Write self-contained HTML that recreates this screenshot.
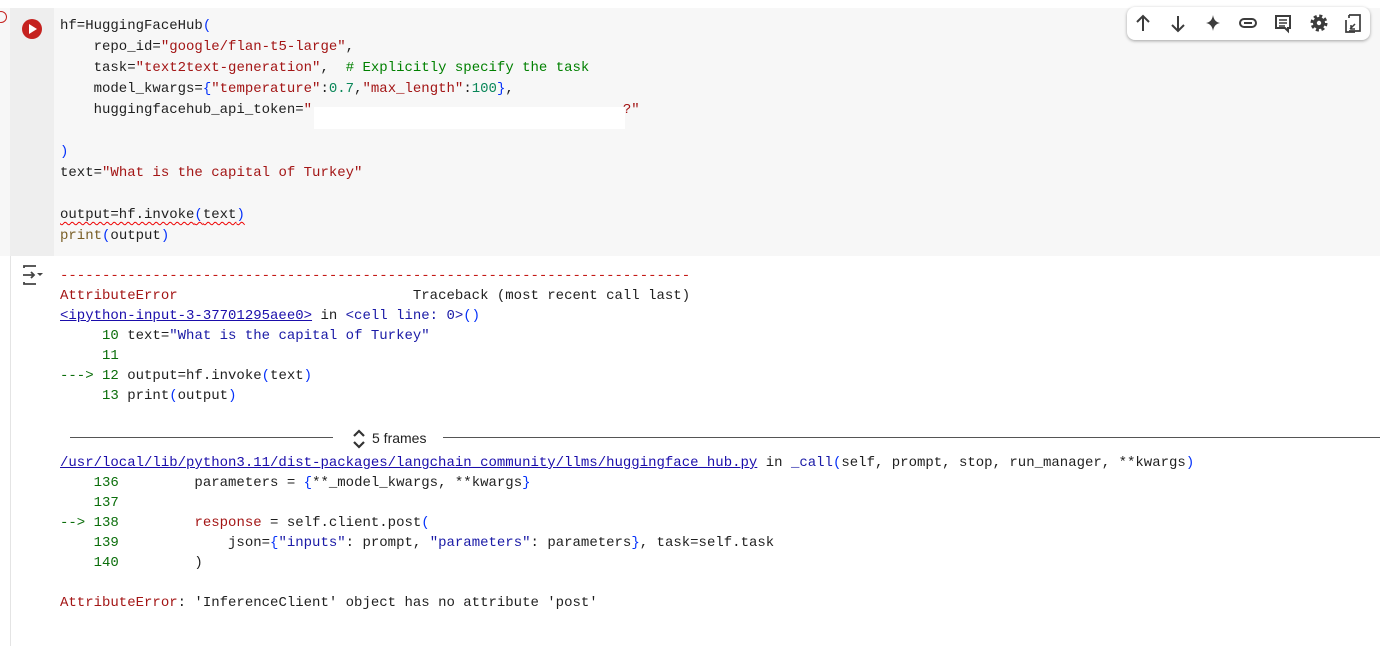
<!DOCTYPE html>
<html><head><meta charset="utf-8"><style>
body{margin:0;width:1380px;height:646px;background:#fff;position:relative;overflow:hidden;font-family:"Liberation Mono",monospace}
.a{position:absolute;white-space:pre}
.code{font-size:14px;line-height:21px;color:#1f1f1f}
.out{font-size:14px;line-height:20px;color:#1f1f1f;letter-spacing:0}
.s{color:#a31515}.g{color:#008000}.n{color:#098658}.b{color:#0431fa}.f{color:#795e26}
.r{color:#a31515}.ln{color:#0b6e0b}.bl{color:#1a1aa6}.lk{color:#1a0dab;text-decoration:underline}
.sq{text-decoration:underline wavy #e00;text-decoration-thickness:1px;text-underline-offset:3px}
</style></head><body>
<div class="a" style="left:0;top:8px;width:1380px;height:248px;background:#f7f7f7"></div>
<div class="a" style="left:10px;top:8px;width:44px;height:248px;background:#eeeeee"></div>
<div class="a" style="left:10px;top:256px;width:1px;height:390px;background:#e4e4e4"></div>
<div class="a" style="left:-5px;top:11px;width:10px;height:10px;border:1.5px solid #c5221f;border-radius:50%"></div>
<svg class="a" style="left:21px;top:18px" width="22" height="22"><circle cx="11" cy="11" r="10" fill="#c5221f"/><path d="M8 6 L16 11 L8 16Z" fill="#fff"/></svg>
<div class="a code" style="left:60px;top:16px">hf=HuggingFaceHub<span class="b">(</span>
    repo_id=<span class="s">"google/flan-t5-large"</span>,
    task=<span class="s">"text2text-generation"</span>,  <span class="g"># Explicitly specify the task</span>
    model_kwargs=<span class="b">{</span><span class="s">"temperature"</span>:<span class="n">0.7</span>,<span class="s">"max_length"</span>:<span class="n">100</span><span class="b">}</span>,
    huggingfacehub_api_token=<span class="s">"                                     ?"</span>

<span class="b">)</span>
text=<span class="s">"What is the capital of Turkey"</span>

<span class="sq">output=hf.invoke<span class="b">(</span>text<span class="b">)</span></span>
<span class="f">print</span><span class="b">(</span>output<span class="b">)</span></div>
<div class="a" style="left:314px;top:107px;width:311px;height:22px;background:#fff"></div>
<div class="a" style="left:1127px;top:7px;width:243px;height:33px;background:#fff;border-radius:8px;box-shadow:0 1px 3px rgba(0,0,0,.35)"></div>
<svg class="a" style="left:1127px;top:7px" width="243" height="33" fill="none" stroke="#3c3c3c" stroke-width="2">
<path d="M16 24V9M10 15l6-6 6 6"/><path d="M51 9v15M45 18l6 6 6-6"/>
<path d="M86 8 Q87 15 93 16 Q87 17 86 24 Q85 17 79 16 Q85 15 86 8Z" fill="#3c3c3c" stroke="none"/>
<rect x="113" y="12" width="16" height="8" rx="4"/><path d="M117 16h8"/>
<path d="M149 9h14v12h-2v3l-3-3h-9z"/><path d="M152 13h8M152 16h8M152 19h6" stroke-width="1.5"/>
<circle cx="192" cy="16" r="6" fill="#3c3c3c" stroke="none"/><circle cx="192" cy="16" r="7" stroke-dasharray="3 2.5" stroke-width="3"/><circle cx="192" cy="16" r="2.2" fill="#fff" stroke="none"/>
<path d="M222 8h11v16h-11M222 11v-3M219 13v12h9" stroke-width="1.7"/><path d="M223 22l5-5M224 18v4h4" stroke-width="1.5"/>
</svg>
<svg class="a" style="left:21px;top:264px" width="24" height="22" fill="none" stroke="#444" stroke-width="1.8"><path d="M3 4V2h12M3 18v2h12M2 11h11M10 8l3 3-3 3"/><path d="M16 9h6l-3 3z" fill="#444" stroke="none"/></svg>
<div class="a out" style="left:60px;top:266px"><span style="color:#c41a16">---------------------------------------------------------------------------</span>
<span class="r">AttributeError</span>                            Traceback (most recent call last)
<span class="lk">&lt;ipython-input-3-37701295aee0&gt;</span> in <span class="bl">&lt;cell line: 0&gt;</span><span class="b">()</span>
<span class="ln">     10</span> text=<span class="bl">"What is the capital of Turkey"</span>
<span class="ln">     11</span>
<span class="ln">---&gt; 12</span> output=hf.invoke<span class="b">(</span>text<span class="b">)</span>
<span class="ln">     13</span> print<span class="b">(</span>output<span class="b">)</span></div>
<div class="a" style="left:70px;top:437px;width:263px;height:1px;background:#555"></div>
<div class="a" style="left:443px;top:437px;width:937px;height:1px;background:#555"></div>
<svg class="a" style="left:352px;top:429px" width="14" height="20" fill="none" stroke="#333" stroke-width="2.2"><path d="M2 7l5-5 5 5M2 13l5 5 5-5"/></svg>
<div class="a" style="left:372px;top:430px;font:14px 'Liberation Sans',sans-serif;color:#222">5 frames</div>
<div class="a out" style="left:60px;top:453px"><span class="lk">/usr/local/lib/python3.11/dist-packages/langchain_community/llms/huggingface_hub.py</span> in <span class="bl">_call</span><span class="b">(</span>self, prompt, stop, run_manager, **kwargs<span class="b">)</span>
<span class="ln">    136</span>         parameters = <span class="b">{</span>**_model_kwargs, **kwargs<span class="b">}</span>
<span class="ln">    137</span>
<span class="ln">--&gt; 138</span>         <span class="r">response</span> = self.client.post<span class="b">(</span>
<span class="ln">    139</span>             json=<span class="b">{</span><span class="bl">"inputs"</span>: prompt, <span class="bl">"parameters"</span>: parameters<span class="b">}</span>, task=self.task
<span class="ln">    140</span>         )

<span class="r">AttributeError</span>: 'InferenceClient' object has no attribute 'post'</div>
</body></html>
